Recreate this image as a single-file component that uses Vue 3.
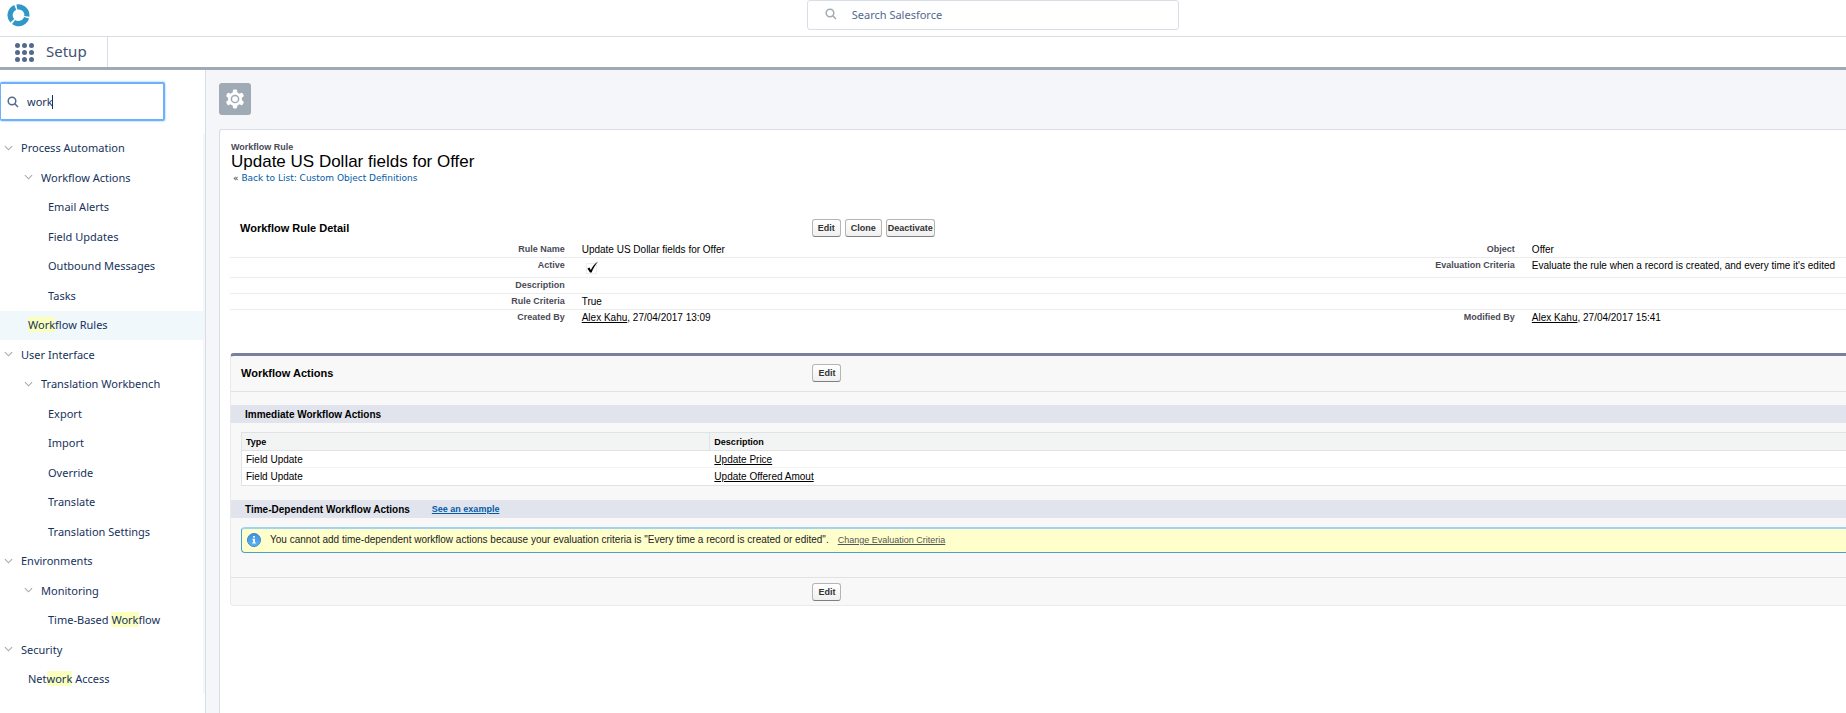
<script setup>
import { ref } from 'vue';

const busca = ref('work');
const buscaGlobal = ref('');

// level: 1 = root, 2 = group, 3 = leaf of a group, 0 = leaf of the root
const menu = [
  { level: 1, parts: ['Process Automation'] },
  { level: 2, parts: ['Workflow Actions'] },
  { level: 3, parts: ['Email Alerts'] },
  { level: 3, parts: ['Field Updates'] },
  { level: 3, parts: ['Outbound Messages'] },
  { level: 3, parts: ['Tasks'] },
  { level: 0, parts: ['', 'Work', 'flow Rules'], active: true },
  { level: 1, parts: ['User Interface'] },
  { level: 2, parts: ['Translation Workbench'] },
  { level: 3, parts: ['Export'] },
  { level: 3, parts: ['Import'] },
  { level: 3, parts: ['Override'] },
  { level: 3, parts: ['Translate'] },
  { level: 3, parts: ['Translation Settings'] },
  { level: 1, parts: ['Environments'] },
  { level: 2, parts: ['Monitoring'] },
  { level: 3, parts: ['Time-Based ', 'Work', 'flow'] },
  { level: 1, parts: ['Security'] },
  { level: 0, parts: ['Net', 'work', ' Access'] },
];

const actions = [
  { type: 'Field Update', description: 'Update Price' },
  { type: 'Field Update', description: 'Update Offered Amout' },
];
</script>

<template>
  <div class="page">
    <header class="top">
      <svg class="logo" viewBox="0 0 24 24" aria-hidden="true">
        <circle cx="12.5" cy="12.2" r="8.4" fill="none" stroke="#3097c9" stroke-width="5.2"
          stroke-dasharray="15.9 1.693" transform="rotate(17 12.5 12.2)" />
      </svg>
      <label class="global-search">
        <svg viewBox="0 0 12 12" aria-hidden="true">
          <circle cx="5" cy="5" r="3.8" /><path d="M7.8 7.8 11 11" />
        </svg>
        <input v-model="buscaGlobal" type="text" placeholder="Search Salesforce" aria-label="Search Salesforce" />
      </label>
    </header>

    <nav class="appbar">
      <div class="app">
        <button class="launcher" aria-label="App Launcher">
          <i v-for="n in 9" :key="n"></i>
        </button>
        <span class="app-name">Setup</span>
      </div>
    </nav>

    <div class="body">
      <aside class="sidebar">
        <label class="quick-find">
          <svg viewBox="0 0 12 12" aria-hidden="true">
            <circle cx="5" cy="5" r="3.8" /><path d="M7.8 7.8 11 11" />
          </svg>
          <input v-model="busca" type="text" aria-label="Quick Find" />
          <span class="caret"></span>
        </label>

        <ul class="tree">
          <li v-for="item in menu" :key="item.parts.join('')" :class="['level-' + item.level, { active: item.active }]">
            <svg v-if="item.level === 1 || item.level === 2" viewBox="0 0 10 6" aria-hidden="true">
              <path d="M1 1 5 5 9 1" />
            </svg>
            <a href="#">{{ item.parts[0] }}<mark v-if="item.parts[1]">{{ item.parts[1] }}</mark>{{ item.parts[2] }}</a>
          </li>
        </ul>
      </aside>

      <main class="content">
        <div class="tile">
          <svg viewBox="0 0 20 20" aria-hidden="true">
            <g fill="#fff">
              <circle cx="10" cy="10" r="7" />
              <rect v-for="n in 6" :key="n" x="7.8" y="0.6" width="4.4" height="5" rx="1.4" :transform="`rotate(${n * 60} 10 10)`" />
            </g>
            <circle cx="10" cy="10" r="3.6" fill="#fff" stroke="#9faab5" stroke-width="1.5" />
          </svg>
        </div>

        <section class="card">
          <p class="kind">Workflow Rule</p>
          <h1>Update US Dollar fields for Offer</h1>
          <p class="back">« <a href="#">Back to List: Custom Object Definitions</a></p>

          <div class="bar detail-bar">
            <h2>Workflow Rule Detail</h2>
            <div class="buttons">
              <button class="btn">Edit</button>
              <button class="btn">Clone</button>
              <button class="btn tight">Deactivate</button>
            </div>
          </div>

          <table class="detail">
            <colgroup>
              <col class="c-label" /><col class="c-value" /><col class="c-label2" /><col />
            </colgroup>
            <tbody>
              <tr>
                <th scope="row">Rule Name</th>
                <td>Update US Dollar fields for Offer</td>
                <th scope="row">Object</th>
                <td>Offer</td>
              </tr>
              <tr class="tall">
                <th scope="row">Active</th>
                <td>
                  <svg class="check" viewBox="0 0 14 14" role="img" aria-label="Checked">
                    <rect x="1.5" y="2.5" width="10" height="10" fill="none" stroke="#ddd" stroke-dasharray="1 1" />
                    <path d="M2.4 7.4 4.4 6.4 5.8 9C7.6 5.4 9.6 3 13 .6 10.4 4 8.2 7.6 6.6 11.6L5 11.6Z" fill="#000" />
                  </svg>
                </td>
                <th scope="row">Evaluation Criteria</th>
                <td>Evaluate the rule when a record is created, and every time it's edited</td>
              </tr>
              <tr>
                <th scope="row">Description</th>
                <td></td>
                <td></td>
                <td></td>
              </tr>
              <tr>
                <th scope="row">Rule Criteria</th>
                <td>True</td>
                <td></td>
                <td></td>
              </tr>
              <tr>
                <th scope="row">Created By</th>
                <td><a href="#">Alex Kahu</a>, 27/04/2017 13:09</td>
                <th scope="row">Modified By</th>
                <td><a href="#">Alex Kahu</a>, 27/04/2017 15:41</td>
              </tr>
            </tbody>
          </table>

          <div class="panel">
            <div class="bar panel-bar">
              <h2>Workflow Actions</h2>
              <div class="buttons"><button class="btn">Edit</button></div>
            </div>

            <h3 class="band">Immediate Workflow Actions</h3>
            <div class="inset">
              <table class="list">
                <thead>
                  <tr>
                    <th scope="col" class="c-type">Type</th>
                    <th scope="col">Description</th>
                  </tr>
                </thead>
                <tbody>
                  <tr v-for="action in actions" :key="action.description">
                    <td>{{ action.type }}</td>
                    <td><a href="#">{{ action.description }}</a></td>
                  </tr>
                </tbody>
              </table>
            </div>

            <div class="band">
              <h3>Time-Dependent Workflow Actions</h3>
              <a href="#">See an example</a>
            </div>
            <div class="inset">
              <div class="notice">
                <svg viewBox="0 0 14 14" aria-hidden="true">
                  <defs>
                    <linearGradient id="info" x1="0" y1="0" x2="0" y2="1">
                      <stop offset="0" stop-color="#3f8fdd" />
                      <stop offset="1" stop-color="#5db4f5" />
                    </linearGradient>
                  </defs>
                  <circle cx="7" cy="7" r="6.5" fill="url(#info)" stroke="#3a86cf" />
                  <path d="M6 3h2v1.6H6ZM5.4 5.8H8V9.6h.8v1H5.3v-1h.8V6.8h-.7Z" fill="#fff" />
                </svg>
                <span>You cannot add time-dependent workflow actions because your evaluation criteria is "Every time a record is created or edited".</span>
                <a href="#">Change Evaluation Criteria</a>
              </div>
            </div>

            <div class="bar panel-foot">
              <div class="buttons"><button class="btn">Edit</button></div>
            </div>
          </div>
        </section>
      </main>
    </div>
  </div>
</template>

<style>
body {
  margin: 0;
  background: #fff;
}
</style>

<style scoped>
.page {
  display: flex;
  flex-direction: column;
  min-height: 100vh;
  overflow: hidden;
  font-family: "Noto Sans", sans-serif;
  font-size: 11px;
  color: #16325c;
}

h1, h2, h3, p, ul {
  margin: 0;
  padding: 0;
}

input {
  border: 0;
  padding: 0;
  outline: 0;
  background: transparent;
  font: inherit;
  color: inherit;
}

/* header */
.top {
  display: grid;
  grid-template-columns: 6fr 372px 5fr;
  height: 36px;
  padding-left: 6px;
  border-bottom: 1px solid #d8dde6;
}

.logo {
  width: 24px;
  height: 24px;
  margin-top: 3px;
}

.global-search {
  display: flex;
  align-items: center;
  gap: 15px;
  box-sizing: border-box;
  height: 30px;
  padding: 0 17px 2px;
  border: 1px solid #d8dde6;
  border-radius: 3px;
}

.global-search svg,
.quick-find svg {
  width: 12px;
  height: 12px;
  fill: none;
  stroke: #9faab5;
  stroke-width: 1.5;
}

.global-search input {
  flex: 1;
}

.global-search input::placeholder {
  color: #54698d;
  opacity: 1;
}

.appbar {
  display: flex;
  height: 30px;
  border-bottom: 3px solid #9faab5;
}

.app {
  display: flex;
  align-items: center;
  gap: 12px;
  padding: 0 20px 0 15px;
  border-right: 1px solid #d8dde6;
}

.launcher {
  display: grid;
  grid-template-columns: repeat(3, 5px);
  gap: 2px;
  padding: 0;
  border: 0;
  background: none;
}

.launcher i {
  width: 5px;
  height: 5px;
  border-radius: 50%;
  background: #54698d;
}

.app-name {
  padding-bottom: 2px;
  font-size: 15px;
  line-height: 28px;
  color: #3e5272;
}

/* sidebar */
.body {
  display: flex;
  flex: 1;
}

.sidebar {
  flex: none;
  box-sizing: border-box;
  width: 206px;
  padding-top: 12px;
  border-right: 1px solid #d8dde6;
}

.quick-find {
  display: flex;
  align-items: center;
  box-sizing: border-box;
  width: 165px;
  height: 39px;
  margin-bottom: 13px;
  padding-left: 6px;
  border: 2px solid #6db0fb;
  border-left-width: 1px;
  border-radius: 2px;
  box-shadow: 0 0 2px #6db0fb;
}

.quick-find svg {
  margin-right: 8px;
  stroke: #54698d;
}

.quick-find input {
  width: 25px;
}

.caret {
  width: 1px;
  height: 14px;
  background: #16325c;
}

.tree {
  list-style: none;
  border-right: 2px solid #f4f6f9;
}

.tree li {
  display: flex;
  align-items: center;
  box-sizing: border-box;
  height: 29px;
  padding-left: 48px;
  padding-bottom: 2px;
}

.tree li:nth-child(even) {
  height: 30px;
}

.tree li.level-0 {
  padding-left: 28px;
}

.tree li.level-1 {
  padding-left: 4px;
}

.tree li.level-2 {
  padding-left: 24px;
}

.tree li.active {
  background: #f0f8fc;
}

.tree svg {
  width: 9px;
  height: 6px;
  margin-right: 8px;
  fill: none;
  stroke: #9faab5;
  stroke-width: 1.2;
}

.tree a {
  color: inherit;
  text-decoration: none;
  white-space: pre;
}

.tree mark {
  color: inherit;
  background: #faffbd;
}

/* content */
.content {
  flex: 1;
  min-width: 0;
  display: flex;
  flex-direction: column;
  padding: 13px 0 0 13px;
  background: #f4f6f9;
  font-family: "Liberation Sans", Arial, sans-serif;
  font-size: 10px;
  color: #000;
}

.tile {
  display: flex;
  align-items: center;
  justify-content: center;
  width: 32px;
  height: 32px;
  margin-bottom: 14px;
  border-radius: 3px;
  background: #9faab5;
}

.tile svg {
  width: 20px;
  height: 20px;
}

.card {
  flex: 1;
  padding: 12px 0 20px 10px;
  border: 1px solid #d8dde6;
  border-width: 1px 0 0 1px;
  border-radius: 3px 0 0 0;
  background: #fff;
}

.kind {
  padding-left: 1px;
  font-size: 9px;
  font-weight: bold;
  line-height: 10px;
  color: #4a4a56;
}

h1 {
  padding-left: 1px;
  font-size: 17px;
  font-weight: normal;
  line-height: 20px;
}

.back {
  padding-left: 3px;
  font-family: "DejaVu Sans", Verdana, sans-serif;
  font-size: 9px;
  line-height: 12px;
  color: #333;
}

.back a {
  color: #015ba7;
  text-decoration: none;
}

.bar {
  display: grid;
  grid-template-columns: 36% 1fr;
  align-items: center;
  box-sizing: border-box;
}

.bar h2 {
  padding-left: 10px;
  font-size: 11px;
}

.buttons {
  grid-column: 2;
  display: flex;
  gap: 4px;
}

.detail-bar {
  height: 28px;
  margin-top: 30px;
}

.btn {
  box-sizing: border-box;
  height: 18px;
  padding: 0 5px;
  border: 1px solid #b5b5b5;
  border-bottom-color: #7f7f7f;
  border-radius: 3px;
  background: linear-gradient(#fff, #f0f0f0);
  font: bold 9px "Liberation Sans", Arial, sans-serif;
  color: #333;
}

.btn.tight {
  padding: 0 1px;
}

.detail {
  width: 100%;
  margin-bottom: 27px;
  table-layout: fixed;
  border-spacing: 0;
}

.c-label {
  width: 21.7%;
}

.c-value {
  width: 48.3%;
}

.c-label2 {
  width: 10.5%;
}

.detail th,
.detail td {
  box-sizing: border-box;
  height: 16px;
  padding: 0 0 0 1px;
  border-bottom: 1px solid #ececec;
  line-height: 15px;
  text-align: left;
  vertical-align: top;
  white-space: nowrap;
}

.detail th {
  padding-right: 16px;
  font-size: 9px;
  text-align: right;
  color: #4a4a56;
}

.detail .tall td,
.detail .tall th {
  height: 20px;
}

.detail tr:last-child > * {
  border-bottom: 0;
}

.detail a,
.list a {
  color: inherit;
}

.check {
  display: block;
  width: 14px;
  height: 14px;
  margin: 3px 0 0 3px;
}

/* workflow actions */
.panel {
  border: 1px solid #eaeaea;
  border-top: 3px solid #7a7f9d;
  border-right: 0;
  border-radius: 4px 0 0 4px;
  background: #f8f8f8;
}

.panel-bar {
  height: 36px;
  margin-bottom: 13px;
  padding-bottom: 2px;
  border-bottom: 1px solid #e2e2e2;
}

.band {
  display: flex;
  align-items: center;
  gap: 22px;
  height: 18px;
  padding-left: 14px;
  background: #e2e4ed;
  font-size: 10px;
}

.band h3 {
  font-size: 10px;
}

.band a {
  font-size: 9px;
  font-weight: bold;
  color: #015ba7;
}

.inset {
  padding: 9px 0 14px 10px;
}

.list {
  width: 100%;
  table-layout: fixed;
  border: 1px solid #e0e3e5;
  border-right: 0;
  border-spacing: 0;
  background: #fff;
}

.list th,
.list td {
  box-sizing: border-box;
  height: 17px;
  padding: 0 0 0 4px;
  text-align: left;
}

.list th {
  height: 18px;
  border-bottom: 1px solid #e0e3e5;
  background: #f2f3f3;
  font-size: 9px;
}

.list tbody tr:first-child td {
  border-bottom: 1px solid #f3f3f3;
}

.list .c-type {
  width: 29.2%;
  border-right: 1px solid #e0e3e5;
}

.notice {
  display: flex;
  align-items: center;
  gap: 9px;
  box-sizing: border-box;
  height: 26px;
  padding: 0 0 2px 5px;
  border: 1px solid #4a9fd0;
  border-top: 2px solid #a0d4f5;
  border-right: 0;
  border-radius: 4px 0 0 4px;
  background: #ffffcc;
  color: #222;
}

.notice svg {
  flex: none;
  width: 14px;
  height: 14px;
}

.notice a {
  font-size: 9px;
  color: #555;
}

.panel-foot {
  height: 28px;
  margin-top: 10px;
  border-top: 1px solid #e2e2e2;
}
</style>
